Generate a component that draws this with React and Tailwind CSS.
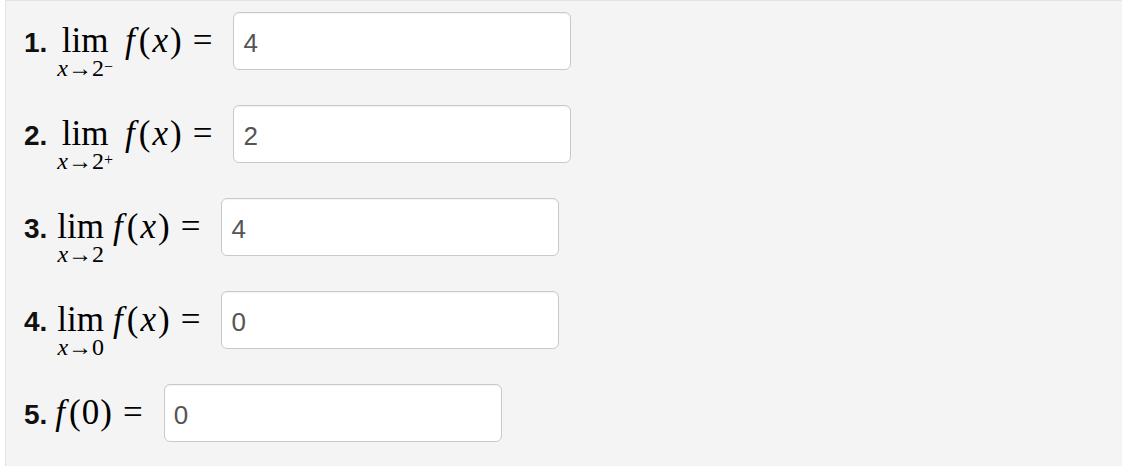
import React from 'react';

const serif = { fontFamily: '"Liberation Serif", "Times New Roman", serif' };

function Lim({ sub }) {
  return (
    <span className="inline-flex flex-col items-center">
      <span className="text-[35px] leading-[34px]">lim</span>
      <span className="text-[24px] leading-[24px] -mt-[2px] whitespace-nowrap">{sub}</span>
    </span>
  );
}

function Fx({ arg = 'x' }) {
  return (
    <span className="text-[35px] leading-[34px] whitespace-nowrap">
      <i className="mr-[4px]">f</i>(
      {arg === 'x' ? <i className="px-[2px]">x</i> : <span className="px-[1px]">{arg}</span>})
    </span>
  );
}

function Row({ num, sub, arg, value, wide }) {
  return (
    <div className="flex items-baseline h-[58px]">
      <span className="font-['Liberation_Sans'] font-bold text-[28px] leading-[34px] text-[#111]">{num}.</span>
      <span className={`flex items-baseline text-black ${sub ? 'ml-[10px]' : 'ml-[8px]'}`} style={serif}>
        {sub ? (
          <>
            <Lim sub={sub} />
            <span className={wide ? 'ml-[12px]' : 'ml-[9px]'}><Fx /></span>
          </>
        ) : (
          <Fx arg={arg} />
        )}
        <span className="text-[35px] leading-[34px] ml-[11px]">=</span>
      </span>
      <div className="ml-[21px] w-[338px] h-[58px] bg-white border border-[#c9c9c9] rounded-[6px] flex items-center pl-[9px] pt-[4px] font-['Liberation_Sans'] text-[26px] text-[#555] shadow-[inset_0_1px_1px_rgba(0,0,0,0.05)]">
        {value}
      </div>
    </div>
  );
}

export default function App() {
  return (
    <div className="w-[1122px] h-[466px] bg-white pl-[5px] overflow-hidden">
      <div className="h-full bg-[#f4f4f4] border-l border-t border-[#e3e3e3] pl-[18px] pt-[11px] flex flex-col gap-[35px]">
        <Row num="1" wide sub={<><i>x</i>→2<sup className="text-[16px] relative -top-[4px]">−</sup></>} value="4" />
        <Row num="2" wide sub={<><i>x</i>→2<sup className="text-[16px] relative -top-[4px]">+</sup></>} value="2" />
        <Row num="3" sub={<><i>x</i>→2</>} value="4" />
        <Row num="4" sub={<><i>x</i>→0</>} value="0" />
        <Row num="5" arg="0" value="0" />
      </div>
    </div>
  );
}
